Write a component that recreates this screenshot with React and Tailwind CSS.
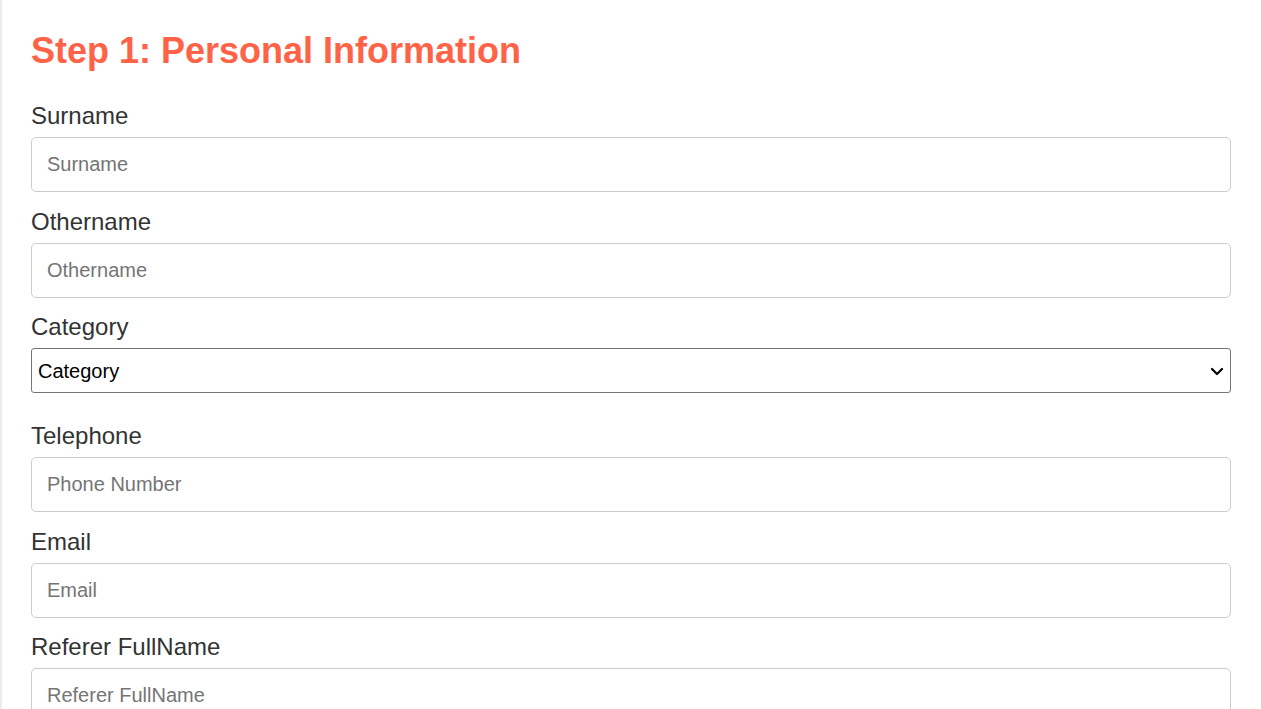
import React from 'react';

const fields = [
  { label: 'Surname', placeholder: 'Surname' },
  { label: 'Othername', placeholder: 'Othername' },
];

const fieldsAfter = [
  { label: 'Telephone', placeholder: 'Phone Number' },
  { label: 'Email', placeholder: 'Email' },
  { label: 'Referer FullName', placeholder: 'Referer FullName' },
];

function TextField({ label, placeholder }) {
  return (
    <div className="mb-[14.5px]">
      <label className="block text-[24px] leading-[30px] text-[#333333] mb-[6px]">{label}</label>
      <input
        type="text"
        placeholder={placeholder}
        className="block w-full h-[55px] border border-[#cccccc] rounded-[5px] px-[15px] text-[20px] text-[#333333] placeholder:text-[#757575] bg-white outline-none"
      />
    </div>
  );
}

export default function App() {
  return (
    <div className="min-h-screen bg-white border-l-2 border-[#ececec] font-['Liberation_Sans',Arial,sans-serif]">
      <div className="pl-[29px] pr-[30px] pt-[29px]">
        <h2 className="text-[36px] leading-[43px] font-bold text-[#ff6347]">Step 1: Personal Information</h2>

        <form className="mt-[29px]" onSubmit={(e) => e.preventDefault()}>
          {fields.map((f) => (
            <TextField key={f.label} {...f} />
          ))}

          <div className="mb-[28px]">
            <label className="block text-[24px] leading-[30px] text-[#333333] mb-[6px]">Category</label>
            <div className="relative">
              <select
                defaultValue=""
                className="block w-full h-[45px] appearance-none border border-[#767676] rounded-[3px] pl-[6px] pr-8 text-[20px] text-black bg-white outline-none"
              >
                <option value="">Category</option>
                <option value="student">Student</option>
                <option value="staff">Staff</option>
              </select>
              <svg
                className="pointer-events-none absolute right-[7px] top-1/2 -translate-y-1/2"
                width="14"
                height="14"
                viewBox="0 0 14 14"
                fill="none"
              >
                <path d="M2 5l5 5 5-5" stroke="#000" strokeWidth="2.2" strokeLinecap="round" strokeLinejoin="round" />
              </svg>
            </div>
          </div>

          {fieldsAfter.map((f) => (
            <TextField key={f.label} {...f} />
          ))}
        </form>
      </div>
    </div>
  );
}
